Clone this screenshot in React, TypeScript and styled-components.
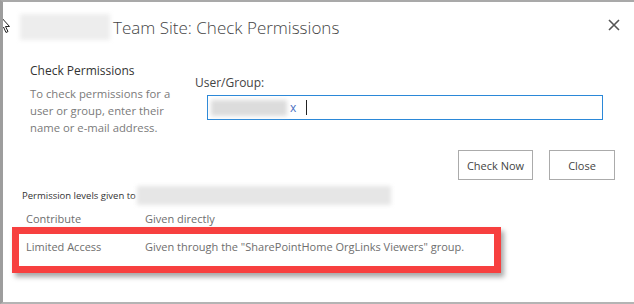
import React from 'react';
import styled, { createGlobalStyle } from 'styled-components';

const GlobalStyle = createGlobalStyle`
  html, body {
    margin: 0;
    padding: 0;
    background: #fff;
  }
  body {
    font-family: "Open Sans", "Noto Sans", sans-serif;
    color: #444;
  }
`;

const rows = [
  { level: 'Contribute', how: 'Given directly', marked: false },
  { level: 'Limited Access', how: 'Given through the "SharePointHome OrgLinks Viewers" group.', marked: true },
];

function Cursor() {
  return (
    <CursorMark width="10" height="18" viewBox="0 0 10 18">
      <path d="M0.5 0.5 L0.5 14 L3.5 11 L6 16.5 L8 15.5 L5.5 10.5 L9.5 10.5 Z" fill="#fff" stroke="#222" strokeWidth="1" />
    </CursorMark>
  );
}

export default function App() {
  return (
    <>
      <GlobalStyle />
      <Dialog>
        <Cursor />
        <Header>
          <Title>
            <Smudge $w={90} $h={26} />
            <TitleText>Team Site: Check Permissions</TitleText>
          </Title>
          <CloseIcon width="12" height="12" viewBox="0 0 12 12">
            <path d="M1 1 L11 11 M11 1 L1 11" stroke="#555" strokeWidth="1.6" />
          </CloseIcon>
        </Header>

        <Form>
          <Side>
            <SideTitle>Check Permissions</SideTitle>
            <SideText>To check permissions for a user or group, enter their name or e-mail address.</SideText>
          </Side>
          <Field>
            <FieldLabel>User/Group:</FieldLabel>
            <PeopleBox>
              <Smudge $w={76} $h={16} $tone="#dcdcdc" />
              <RemoveX>x</RemoveX>
              <Caret />
            </PeopleBox>
          </Field>
        </Form>

        <Actions>
          <Button>Check Now</Button>
          <Button $narrow>Close</Button>
        </Actions>

        <Results>
          <ResultsHead>
            Permission levels given to
            <Smudge $w={254} $h={19} $tone="#e6e6e6" />
          </ResultsHead>
          {rows.map((r) => (
            <Row key={r.level} $marked={r.marked}>
              <Level>{r.level}</Level>
              <How>{r.how}</How>
            </Row>
          ))}
        </Results>
      </Dialog>
    </>
  );
}

const Dialog = styled.div`
  position: relative;
  width: 634px;
  height: 304px;
  box-sizing: border-box;
  border-top: 2px solid #a9a9a9;
  border-left: 3px solid #9d9d9d;
  border-bottom: 2px solid #b4b4b4;
  background: #fff;
  overflow: hidden;
`;

const CursorMark = styled.svg`
  position: absolute;
  left: -3px;
  top: 14px;
`;

const Header = styled.div`
  display: flex;
  justify-content: space-between;
  align-items: flex-start;
  padding: 12px 14px 0 17px;
  height: 40px;
  box-sizing: border-box;
`;

const Title = styled.div`
  display: flex;
  align-items: center;
  gap: 3px;
`;

const TitleText = styled.div`
  font-size: 17px;
  font-weight: 300;
  color: #444;
  white-space: nowrap;
`;

const Smudge = styled.span<{ $w: number; $h: number; $tone?: string }>`
  display: inline-block;
  width: ${(p) => p.$w}px;
  height: ${(p) => p.$h}px;
  background: ${(p) => p.$tone || '#ededed'};
  filter: blur(2px);
  flex-shrink: 0;
`;

const CloseIcon = styled.svg`
  margin-top: 5px;
`;

const Form = styled.div`
  display: flex;
  padding: 20px 0 0 27px;
`;

const Side = styled.div`
  width: 165px;
`;

const SideTitle = styled.div`
  font-size: 12px;
  line-height: 17px;
  color: #333;
  margin-bottom: 6px;
`;

const SideText = styled.div`
  font-size: 11.3px;
  line-height: 17px;
  color: #7a7a7a;
  width: 150px;
`;

const Field = styled.div`
  padding-top: 12px;
`;

const FieldLabel = styled.div`
  font-size: 12px;
  line-height: 17px;
  color: #444;
  margin-bottom: 4px;
`;

const PeopleBox = styled.div`
  display: flex;
  align-items: center;
  margin-left: 12px;
  width: 396px;
  height: 25px;
  box-sizing: border-box;
  border: 1px solid #2b88d8;
  padding-left: 3px;
`;

const RemoveX = styled.span`
  font-size: 12px;
  color: #4a6fbf;
  margin: 0 0 0 3px;
`;

const Caret = styled.span`
  width: 1px;
  height: 15px;
  background: #222;
  margin-left: 10px;
`;

const Actions = styled.div`
  display: flex;
  justify-content: flex-end;
  gap: 16px;
  padding: 14px 19px 0 0;
`;

const Button = styled.div<{ $narrow?: boolean }>`
  display: flex;
  align-items: center;
  justify-content: center;
  width: ${(p) => (p.$narrow ? 66 : 75)}px;
  height: 30px;
  box-sizing: border-box;
  border: 1px solid #ababab;
  font-size: 11px;
  color: #444;
`;

const Results = styled.div`
  padding: 6px 0 0 9px;
`;

const ResultsHead = styled.div`
  display: flex;
  align-items: center;
  gap: 1px;
  padding-left: 10px;
  font-size: 9.5px;
  color: #333;
`;

const Row = styled.div<{ $marked: boolean }>`
  display: flex;
  width: 489px;
  box-sizing: border-box;
  font-size: 11px;
  line-height: 16px;
  color: #6e6e6e;
  ${(p) => (p.$marked
    ? `
    height: 46px;
    border: 7px solid #f7403f;
    padding: 5px 0 0 7px;
    box-shadow: 3px 4px 5px rgba(0, 0, 0, 0.35);
    position: relative;
  `
    : `
    height: 22px;
    padding: 6px 0 0 14px;
  `)}
`;

const Level = styled.div`
  width: 119px;
`;

const How = styled.div`
  white-space: nowrap;
`;
